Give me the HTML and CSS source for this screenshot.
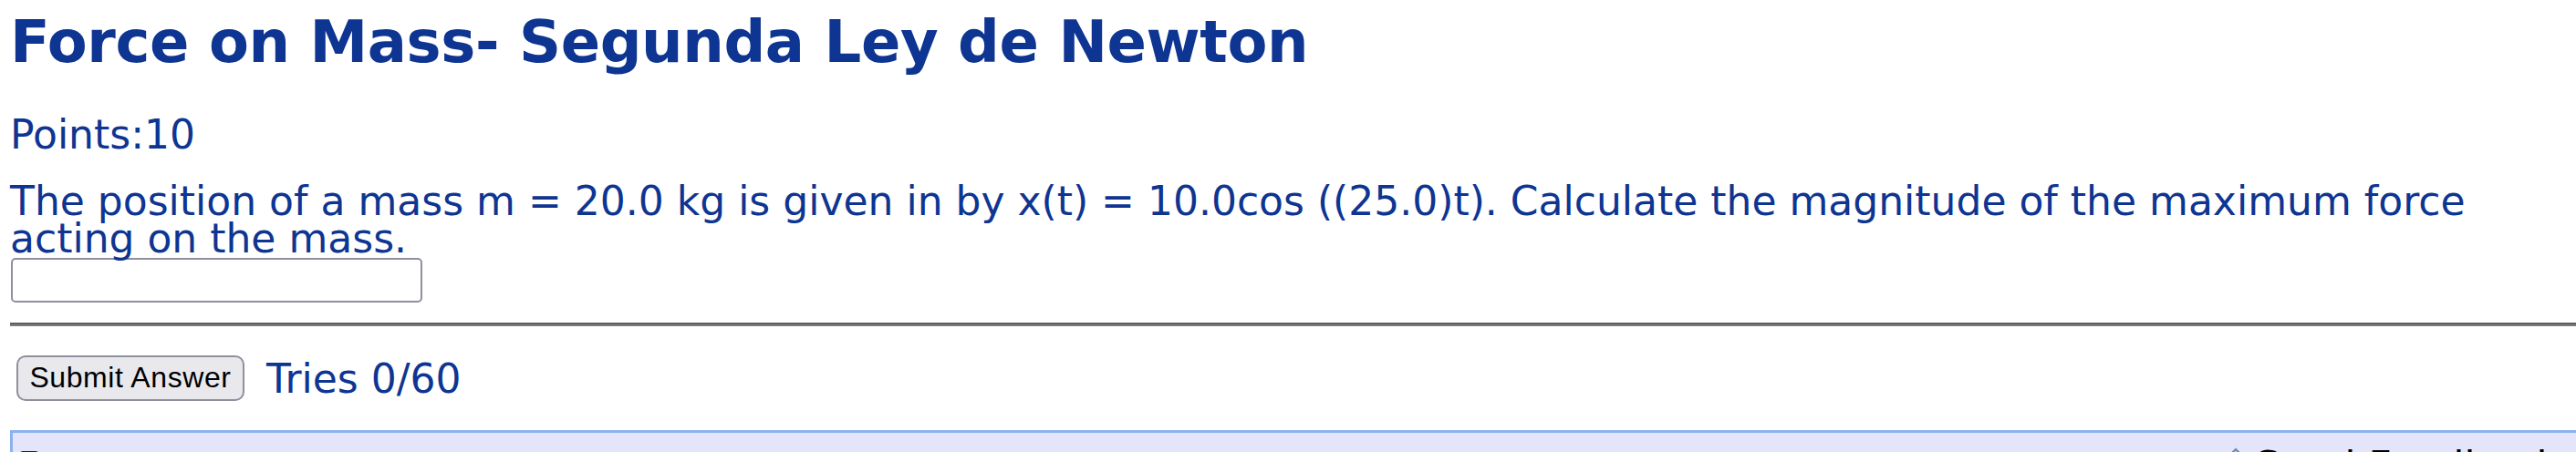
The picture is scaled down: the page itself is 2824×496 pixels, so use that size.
FILE: index.html
```html
<!DOCTYPE html>
<html>
<head>
<meta charset="utf-8">
<link rel="stylesheet" href="styles.css">
</head>
<body>
<div class="page">
  <h1 class="title">Force on Mass- Segunda Ley de Newton</h1>
  <p class="points">Points:10</p>
  <p class="question">The position of a mass m = 20.0 kg is given in by x(t) = 10.0cos ((25.0)t). Calculate the magnitude of the maximum force acting on the mass.</p>
  <input class="answer" type="text">
  <hr class="rule">
  <div class="submit-row">
    <button class="submit" type="button">Submit Answer</button>
    <span class="tries">Tries 0/60</span>
  </div>
  <div class="feedback">
    <span class="toggle"></span>
    <span class="send">
      <svg class="pencil" width="34" height="34" viewBox="0 0 34 34"><path d="M4 30 L8 20 L26 2 L32 8 L14 26 Z" fill="#c9d3e6" stroke="#6f86b3" stroke-width="2"/><path d="M4 30 L8 20 L14 26 Z" fill="#8ea2c8"/></svg>
      <span class="send-text">Send Feedback</span>
    </span>
  </div>
</div>
</body>
</html>
```
FILE: styles.css
```css
html, body {
  margin: 0;
  padding: 0;
  background: #ffffff;
}
.page {
  padding: 0 0 0 11px;
  font-family: "DejaVu Sans", Verdana, sans-serif;
  color: #0e3592;
}
.title {
  font-size: 64px;
  font-weight: bold;
  letter-spacing: -0.4px;
  line-height: 80px;
  margin: 6px 0 0 0;
}
.points {
  font-size: 44px;
  line-height: 50px;
  margin: 37px 0 0 0;
}
.question {
  font-size: 44px;
  line-height: 41px;
  margin: 27px 0 0 0;
}
.answer {
  display: block;
  box-sizing: border-box;
  width: 451px;
  height: 49px;
  margin: 1px 0 0 1px;
  border: 2px solid #8f8f9d;
  border-radius: 5px;
  background: #ffffff;
}
.rule {
  margin: 22px 0 0 0;
  height: 0;
  border: none;
  border-top: 2px solid #5e5e5e;
  border-bottom: 2px solid #7c7c7c;
}
.submit-row {
  display: flex;
  align-items: center;
  gap: 24px;
  margin: 30px 0 0 7px;
}
.submit {
  box-sizing: border-box;
  width: 250px;
  height: 50px;
  padding: 0;
  border: 2px solid #8f8f9d;
  border-radius: 10px;
  background: #e9e9ed;
  color: #000000;
  font-family: "Liberation Sans", Arial, sans-serif;
  font-size: 32px;
  letter-spacing: 0.6px;
}
.tries {
  font-size: 44px;
  line-height: 50px;
  padding-top: 3px;
}
.feedback {
  margin-top: 31px;
  height: 80px;
  background: #e4e4fa;
  border-top: 3px solid #89b3ee;
  border-left: 3px solid #89b3ee;
  display: flex;
  justify-content: space-between;
  align-items: flex-start;
  padding: 20px 0 0 8px;
}
.toggle {
  width: 20px;
  height: 20px;
  background: #222222;
  border-radius: 3px;
}
.send {
  display: flex;
  align-items: flex-start;
  gap: 13px;
  margin-right: 18px;
  margin-top: -8px;
  color: #000000;
}
.pencil {
  margin-top: 4px;
}
.send-text {
  font-size: 44px;
  line-height: 50px;
}
```
